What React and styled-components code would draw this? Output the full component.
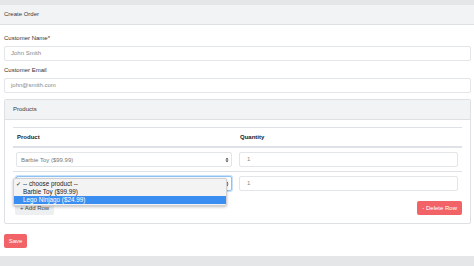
import React from "react";
import styled, {createGlobalStyle} from "styled-components";

const GlobalStyle = createGlobalStyle`
  html, body {
    margin: 0;
    padding: 0;
    background: #fff;
    font-family: "Liberation Sans", Arial, sans-serif;
    color: #333;
  }
  * { box-sizing: border-box; }
`

const rows = [
  {product: "Barbie Toy ($99.99)", qty: "1"},
  {product: "-- choose product --", qty: "1", open: true},
]

const options = ["-- choose product --", "Barbie Toy ($99.99)", "Lego Ninjago ($24.99)"]

const Arrows = () => (
  <svg width="4" height="6" viewBox="0 0 4 6">
    <path d="M0.5 2.4 L2 0.8 L3.5 2.4 Z M0.5 3.6 L2 5.2 L3.5 3.6 Z" fill="#333"/>
  </svg>
)

const App = () => {
  return (
    <Page>
      <GlobalStyle/>
      <TopBar/>
      <CardHeader>Create Order</CardHeader>
      <Form>
        <Label>Customer Name*</Label>
        <Input>John Smith</Input>
        <Label>Customer Email</Label>
        <Input>john@smith.com</Input>
        <Card>
          <CardHeader inner>Products</CardHeader>
          <CardBody>
            <Table>
              <HeadRow>
                <HeadCell>Product</HeadCell>
                <HeadCell>Quantity</HeadCell>
              </HeadRow>
              {rows.map((row, i) => (
                <Row key={i}>
                  <Cell>
                    <SelectBox focused={row.open}>
                      <span>{row.open ? "" : row.product}</span>
                      <Arrows/>
                      {row.open && (
                        <Dropdown>
                          {options.map((opt, j) => (
                            <Option key={opt} active={j === 2}>
                              <Check>{j === 0 ? "✓" : ""}</Check>
                              {opt}
                            </Option>
                          ))}
                        </Dropdown>
                      )}
                    </SelectBox>
                  </Cell>
                  <Cell>
                    <Input small>{row.qty}</Input>
                  </Cell>
                </Row>
              ))}
            </Table>
            <Actions>
              <Button variant="light">+ Add Row</Button>
              <Button variant="danger">- Delete Row</Button>
            </Actions>
          </CardBody>
        </Card>
        <SaveWrap>
          <Button variant="danger" wide>Save</Button>
        </SaveWrap>
      </Form>
      <BottomBar/>
    </Page>
  )
}

const Page = styled.div`
  width: 474px;
  height: 266px;
  overflow: hidden;
  display: flex;
  flex-direction: column;
`

const TopBar = styled.div`
  height: 5px;
  background: #e4e6e8;
`

const BottomBar = styled.div`
  height: 10px;
  margin-top: auto;
  background: #e4e6e8;
`

const CardHeader = styled.div`
  height: 20px;
  line-height: 19px;
  padding-left: ${props => props.inner ? "8px" : "4px"};
  background: #f1f3f5;
  border-bottom: 1px solid #dde1e4;
  font-size: 6px;
  color: #3a3a3a;
`

const Form = styled.div`
  padding: 10px 3px 0 4px;
  display: flex;
  flex-direction: column;
`

const Label = styled.div`
  font-size: 6px;
  line-height: 7px;
  color: #333;
  margin-bottom: 4px;
`

const Input = styled.div`
  height: 15px;
  border: 1px solid #e3e6e9;
  border-radius: 2px;
  padding-left: ${props => props.small ? "7px" : "6px"};
  font-size: 6px;
  line-height: 13px;
  color: #888;
  background: #fff;
  margin-bottom: ${props => props.small ? "0" : "6px"};
`

const Card = styled.div`
  margin-top: 0;
  border: 1px solid #dde1e4;
  border-radius: 2px;
`

const CardBody = styled.div`
  padding: 7px 8px 8px 8px;
`

const Table = styled.div`
  border-top: 1px solid #dee2e6;
`

const HeadRow = styled.div`
  display: grid;
  grid-template-columns: 223px 1fr;
  height: 20px;
  border-bottom: 2px solid #dee2e6;
  align-items: center;
`

const HeadCell = styled.div`
  padding: 0 4px;
  font-size: 6px;
  font-weight: bold;
  color: #222;
`

const Row = styled.div`
  display: grid;
  grid-template-columns: 223px 1fr;
  padding: 4px 0 4px;
  & + & {
    border-top: 1px solid #dee2e6;
  }
`

const Cell = styled.div`
  padding: 0 4px 0 3px;
  position: relative;
`

const SelectBox = styled.div`
  position: relative;
  height: 15px;
  border: 1px solid ${props => props.focused ? "#8ec3f5" : "#e3e6e9"};
  box-shadow: ${props => props.focused ? "0 0 0 1px rgba(100, 170, 240, 0.35)" : "none"};
  border-radius: 2px;
  padding: 0 2px 0 4px;
  display: flex;
  align-items: center;
  justify-content: space-between;
  font-size: 6px;
  color: #777;
  background: #fff;
`

const Dropdown = styled.div`
  position: absolute;
  left: -4px;
  top: 1px;
  width: 214px;
  padding: 1px 0 1px;
  background: #f3f3f3;
  border: 1px solid #d0d0d0;
  border-radius: 2px;
  box-shadow: 0 1px 3px rgba(0, 0, 0, 0.25);
  z-index: 5;
`

const Option = styled.div`
  height: 8px;
  line-height: 8px;
  font-size: 6.3px;
  display: flex;
  color: ${props => props.active ? "#fff" : "#222"};
  background: ${props => props.active ? "#3a8ef2" : "transparent"};
`

const Check = styled.span`
  width: 9px;
  padding-left: 2px;
  font-size: 6px;
`

const Actions = styled.div`
  display: flex;
  justify-content: space-between;
  align-items: flex-end;
  margin-top: 6px;
  padding: 0 0 0 2px;
`

const Button = styled.div`
  height: ${props => props.variant === "light" ? "13px" : "14px"};
  padding: 0 ${props => props.wide ? "0" : "5px"};
  width: ${props => props.wide ? "23px" : "auto"};
  text-align: center;
  font-size: 6px;
  line-height: ${props => props.variant === "light" ? "13px" : "14px"};
  border-radius: 2px;
  color: ${props => props.variant === "danger" ? "#fff" : "#444"};
  background: ${props => props.variant === "danger" ? "#f26368" : "#edeff1"};
`

const SaveWrap = styled.div`
  display: flex;
  margin-top: 10px;
`

export default App
